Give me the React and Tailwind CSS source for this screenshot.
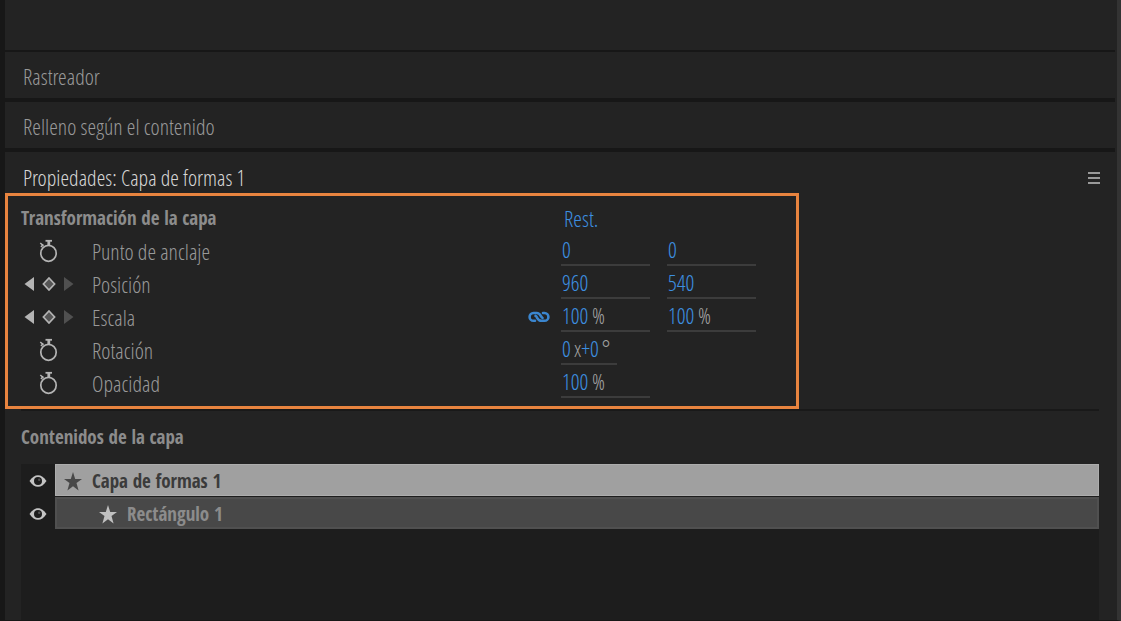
import React, { useState } from "react";

const transformRows = [
  {
    id: "anchor",
    label: "Punto de anclaje",
    fields: [{ value: "0" }, { value: "0" }],
  },
  {
    id: "position",
    label: "Posición",
    keyframed: true,
    fields: [{ value: "960" }, { value: "540" }],
  },
  {
    id: "scale",
    label: "Escala",
    keyframed: true,
    linked: true,
    fields: [
      { value: "100", unit: "%" },
      { value: "100", unit: "%" },
    ],
  },
  { id: "rotation", label: "Rotación", rotation: true },
  { id: "opacity", label: "Opacidad", fields: [{ value: "100", unit: "%" }] },
];

function StopwatchIcon() {
  return (
    <svg width="20" height="24" viewBox="0 0 20 24" fill="none" stroke="#b4b4b4">
      <ellipse cx="10.5" cy="14.3" rx="7.7" ry="8" strokeWidth="1.7" />
      <path d="M7.500 1.800h6.500" strokeWidth="1.800" />
      <path d="M10.800 2v4.500" strokeWidth="2.800" />
      <path d="M2.300 4l3.200 3M5.200 5.200L3 8" strokeWidth="1.500" />
    </svg>
  );
}

function LinkIcon() {
  return (
    <svg
      width="22"
      height="12"
      viewBox="0 0 22 12"
      fill="none"
      stroke="#3b86cf"
      strokeWidth="2.6"
      strokeLinecap="round"
    >
      <path d="M7 9.800H5.500a3.900 3.900 0 0 1 0-7.800h3.200c2.600 0 3.400 1.600 4.300 3.200c.5 1 .8 1.400 1.500 1.700" />
      <path d="M15 2h1.500a3.900 3.900 0 0 1 0 7.800h-3.200c-2.600 0-3.400-1.600-4.300-3.200c-.5-1-.8-1.400-1.500-1.700" />
    </svg>
  );
}

function EyeIcon() {
  return (
    <svg width="18" height="14" viewBox="0 0 18 14">
      <path d="M.5 7C3 3 6 1.200 9 1.200S15 3 17.500 7C15 11 12 12.800 9 12.800S3 11 .5 7z" fill="#c4c4c4" />
      <circle cx="9" cy="7" r="4" fill="#1d1d1d" />
      <circle cx="10.200" cy="5.800" r="1.200" fill="#555" />
    </svg>
  );
}

function StarIcon({ className }) {
  return (
    <svg width="18" height="19" viewBox="0 0 18 19" className={className} fill="currentColor">
      <path d="M9 0l2.200 6.900H18l-5.500 4.200 2.100 7.400L9 14.200l-5.600 4.300 2.100-7.400L0 6.900h6.800z" />
    </svg>
  );
}

function KeyframeNav({ label }) {
  return (
    <div className="flex items-center gap-2 pl-4">
      <button aria-label={`Fotograma clave anterior: ${label}`}>
        <svg width="10" height="14" viewBox="0 0 10 14">
          <path d="M10 0v14L.5 7z" fill="#b4b4b4" />
        </svg>
      </button>
      <button aria-label={`Añadir fotograma clave: ${label}`}>
        <svg width="14" height="14" viewBox="0 0 14 14">
          <path d="M7 1l5.600 6L7 13 1.400 7z" fill="#555" stroke="#b4b4b4" strokeWidth="1.700" />
        </svg>
      </button>
      <button aria-label={`Fotograma clave siguiente: ${label}`}>
        <svg width="10" height="14" viewBox="0 0 10 14">
          <path d="M0 0v14L9.500 7z" fill="#505050" />
        </svg>
      </button>
    </div>
  );
}

const numberClass =
  "min-w-0 bg-transparent p-0 text-[22px] leading-6 text-[#3d8fe0] outline-none";
const unitClass = "text-[22px] leading-6 text-[#a0a0a0]";
const fieldClass = "flex h-8 items-center border-b-2 border-[#3c3c3c] pl-px";
const headingClass =
  "font-['Open_Sans_Condensed','Roboto_Condensed',sans-serif] text-[19px] font-bold leading-6";

function ValueField({ label, value, unit }) {
  const [text, setText] = useState(value);

  return (
    <div className={`${fieldClass} w-[89px]`}>
      <input
        aria-label={label}
        value={text}
        onChange={(e) => setText(e.target.value)}
        className={`${numberClass} ${unit ? "w-[30px]" : "w-full"}`}
      />
      {unit && <span className={unitClass}>{unit}</span>}
    </div>
  );
}

function RotationField({ label }) {
  const [turns, setTurns] = useState("0");
  const [degrees, setDegrees] = useState("+0");

  return (
    <div className={`${fieldClass} w-14`}>
      <input
        aria-label={`${label}, vueltas`}
        value={turns}
        onChange={(e) => setTurns(e.target.value)}
        className={`${numberClass} w-3`}
      />
      <span className={unitClass}>x</span>
      <input
        aria-label={`${label}, grados`}
        value={degrees}
        onChange={(e) => setDegrees(e.target.value)}
        className={`${numberClass} w-5`}
      />
      <span className={unitClass}>°</span>
    </div>
  );
}

function TransformRow({ row }) {
  return (
    <div className="flex h-[33px] items-center">
      <div className="w-[84px] shrink-0">
        {row.keyframed ? (
          <KeyframeNav label={row.label} />
        ) : (
          <button aria-label={`Cronómetro: ${row.label}`} className="block pl-[30px]">
            <StopwatchIcon />
          </button>
        )}
      </div>
      <span className="flex-1 text-[22px] leading-6 text-[#999]">{row.label}</span>
      {row.linked && (
        <button aria-label="Restringir proporciones" className="mr-[11px]">
          <LinkIcon />
        </button>
      )}
      <div className="flex w-[195px] gap-[17px] self-start">
        {row.rotation ? (
          <RotationField label={row.label} />
        ) : (
          row.fields.map((field, i) => (
            <ValueField
              key={i}
              label={`${row.label} ${i + 1}`}
              value={field.value}
              unit={field.unit}
            />
          ))
        )}
      </div>
    </div>
  );
}

function PanelTab({ title }) {
  return (
    <button className="flex h-[50px] w-full items-center border-b-4 border-[#171717] pl-[18px] pt-0.5 text-left text-[22px] leading-6 text-[#999]">
      {title}
    </button>
  );
}

function App() {
  return (
    <div className="flex min-h-screen flex-col border-b border-l-5 border-r-4 border-b-[#171717] border-l-[#171717] border-r-[#333] bg-[#232323] font-['Open_Sans_Condensed_Light','Roboto_Condensed',sans-serif]">
      <div className="mr-0.5 h-[52px] border-b-2 border-[#171717]" />
      <div className="mr-0.5">
        <PanelTab title="Rastreador" />
        <PanelTab title="Relleno según el contenido" />
      </div>

      <header className="flex h-[41px] items-center justify-between pl-[18px] pr-[17px] pt-2">
        <h1 className="text-[22px] leading-6 text-[#d6d6d6]">
          Propiedades: Capa de formas 1
        </h1>
        <button aria-label="Menú del panel" className="flex w-3 flex-col gap-[3px] pt-0.5">
          <span className="h-0.5 bg-[#999]" />
          <span className="h-0.5 bg-[#999]" />
          <span className="h-0.5 bg-[#999]" />
        </button>
      </header>

      <section className="w-full max-w-[794px] border-3 border-[#e8843f] pb-[7px] pr-10 pt-[5px]">
        <div className="flex h-[33px] items-center pl-[13px]">
          <h2 className={`${headingClass} flex-1 text-[#8c8c8c]`}>
            Transformación de la capa
          </h2>
          <button className="w-[195px] pl-[3px] text-left text-[22px] leading-6 text-[#3d8fe0]">
            Rest.
          </button>
        </div>
        {transformRows.map((row) => (
          <TransformRow key={row.id} row={row} />
        ))}
      </section>

      <section className="flex flex-1 flex-col pl-4 pr-[18px]">
        <h2
          className={`${headingClass} border-t-2 border-[#191919] pb-[15px] pt-[14px] text-[#8c8c8c]`}
        >
          Contenidos de la capa
        </h2>
        <ul className="flex flex-1 flex-col gap-px bg-[#1d1d1d]">
          <li className="flex h-8 items-center">
            <button aria-label="Mostrar u ocultar Capa de formas 1" className="w-[34px] pl-2 pt-0.5">
              <EyeIcon />
            </button>
            <button
              className={`${headingClass} flex h-8 flex-1 items-center gap-2.5 border border-[#adadad] bg-[#a0a0a0] pl-2 pt-0.5 text-left text-[#3b3b3b]`}
            >
              <StarIcon className="text-[#484848]" />
              Capa de formas 1
            </button>
          </li>
          <li className="flex h-8 items-center">
            <button aria-label="Mostrar u ocultar Rectángulo 1" className="w-[34px] pl-2 pt-0.5">
              <EyeIcon />
            </button>
            <button
              className={`${headingClass} flex h-8 flex-1 items-center gap-2.5 border-2 border-[#505050] bg-[#484848] pl-[42px] pt-0.5 text-left text-[#8c8c8c]`}
            >
              <StarIcon className="text-[#c0c0c0]" />
              Rectángulo 1
            </button>
          </li>
        </ul>
      </section>
    </div>
  );
}

export default App;
